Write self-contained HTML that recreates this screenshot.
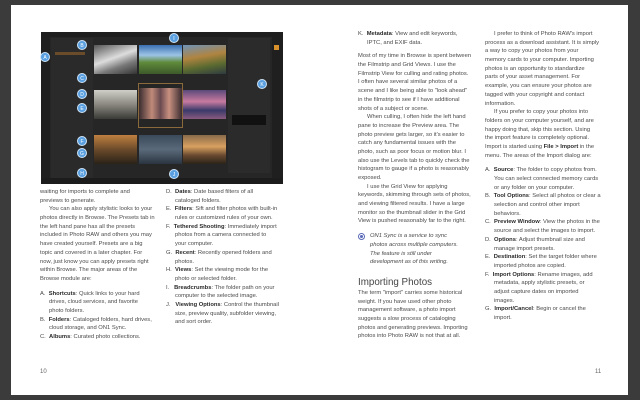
<!DOCTYPE html>
<html><head><meta charset="utf-8"><style>
*{margin:0;padding:0;box-sizing:border-box}
body{width:640px;height:400px;background:#3b3b3b;position:relative;overflow:hidden;font-family:"Liberation Sans",sans-serif}
.page{position:absolute;background:#fff;top:5px;height:390px}
.col{position:absolute;font-size:5.8px;line-height:8.7px;color:#4a4a4a;white-space:nowrap}
.col div{height:8.7px}
.col b{color:#2a2a2a}
.ind{padding-left:9px}
.gap{height:6px!important}
.ss{position:absolute;left:41px;top:32px;width:242px;height:152px;background:#262626}
.ph{position:absolute;width:43px;height:29px}
.bc{position:absolute;width:10px;height:10px;border-radius:50%;background:#5aa0e0;color:#fff;font-size:5px;line-height:10px;text-align:center;border:0.7px solid #cfe4f7}
.pn{position:absolute;font-size:6px;color:#666}
</style></head><body>
<div class="page" style="left:11px;width:309px"></div>
<div class="page" style="left:320px;width:308px"></div>

<div class="ss">
  <div style="position:absolute;left:0;top:0;width:242px;height:5px;background:#1e1e1e"></div>
  <div style="position:absolute;left:0;top:5px;width:9px;height:147px;background:#1f1f1f"></div>
  <div style="position:absolute;left:10px;top:6px;width:42px;height:140px;background:#2a2a2a"></div>
  <div style="position:absolute;left:14px;top:20px;width:30px;height:3px;background:#6a4b2a"></div>
  <div style="position:absolute;left:187px;top:6px;width:42px;height:135px;background:#2b2b2b"></div>
  <div style="position:absolute;left:191px;top:83px;width:34px;height:10px;background:#111"></div>
  <div style="position:absolute;left:231px;top:5px;width:11px;height:147px;background:#1f1f1f"></div>
  <div style="position:absolute;left:233px;top:13px;width:5px;height:5px;background:#d9912c"></div>
  <div style="position:absolute;left:0;top:146px;width:242px;height:6px;background:#1c1c1c"></div>
  <div style="position:absolute;left:97px;top:51px;width:45px;height:45px;border:1px solid #8a6a3a"></div>
  <div class="ph" style="left:53px;top:13px;background:linear-gradient(160deg,#555 0%,#ddd 45%,#777 70%,#333 100%)"></div>
  <div class="ph" style="left:98px;top:13px;background:linear-gradient(180deg,#3a6fb0 0%,#9cc4e6 35%,#5f8a3a 60%,#3d5a2a 100%)"></div>
  <div class="ph" style="left:142px;top:13px;background:linear-gradient(170deg,#6f93b8 0%,#b08440 40%,#5a6a30 70%,#2e3a40 100%)"></div>
  <div class="ph" style="left:53px;top:58px;background:linear-gradient(180deg,#cfcfc8 0%,#8a8880 50%,#3a3a36 100%)"></div>
  <div class="ph" style="left:98px;top:56px;width:43px;height:31px;background:linear-gradient(90deg,#3a2c30 0%,#c08a78 30%,#6a4a50 50%,#c89080 70%,#3a2c30 100%)"></div>
  <div class="ph" style="left:142px;top:58px;background:linear-gradient(180deg,#5a4a7a 0%,#c87aa0 40%,#3a3a6a 70%,#8a5a80 100%)"></div>
  <div class="ph" style="left:53px;top:103px;background:linear-gradient(180deg,#c08040 0%,#6a4a2a 50%,#2a2218 100%)"></div>
  <div class="ph" style="left:98px;top:103px;background:linear-gradient(180deg,#3a4a5a 0%,#5a6a7a 50%,#2a3440 100%)"></div>
  <div class="ph" style="left:142px;top:103px;background:linear-gradient(180deg,#8a6a4a 0%,#d8a060 40%,#6a4a30 70%,#2a2418 100%)"></div>
  <div class="bc" style="left:-1px;top:20px">A</div>
  <div class="bc" style="left:36px;top:8px">B</div>
  <div class="bc" style="left:36px;top:41px">C</div>
  <div class="bc" style="left:36px;top:57px">D</div>
  <div class="bc" style="left:36px;top:71px">E</div>
  <div class="bc" style="left:36px;top:104px">F</div>
  <div class="bc" style="left:36px;top:116px">G</div>
  <div class="bc" style="left:36px;top:136px">H</div>
  <div class="bc" style="left:128px;top:1px">I</div>
  <div class="bc" style="left:128px;top:137px">J</div>
  <div class="bc" style="left:216px;top:47px">K</div>
</div>

<div class="col" style="left:40px;top:188px">
<div>waiting for imports to complete and</div>
<div>previews to generate.</div>
<div class="ind">You can also apply stylistic looks to your</div>
<div>photos directly in Browse. The Presets tab in</div>
<div>the left hand pane has all the presets</div>
<div>included in Photo RAW and others you may</div>
<div>have created yourself. Presets are a big</div>
<div>topic and covered in a later chapter. For</div>
<div>now, just know you can apply presets right</div>
<div>within Browse. The major areas of the</div>
<div>Browse module are:</div>
<div class="gap"></div>
<div>A.&nbsp; <b>Shortcuts</b>: Quick links to your hard</div>
<div class="ind">drives, cloud services, and favorite</div>
<div class="ind">photo folders.</div>
<div>B.&nbsp; <b>Folders</b>: Cataloged folders, hard drives,</div>
<div class="ind">cloud storage, and ON1 Sync.</div>
<div>C.&nbsp; <b>Albums</b>: Curated photo collections.</div>
</div>

<div class="col" style="left:166px;top:188px">
<div>D.&nbsp; <b>Dates</b>: Date based filters of all</div>
<div class="ind">cataloged folders.</div>
<div>E.&nbsp; <b>Filters</b>: Sift and filter photos with built-in</div>
<div class="ind">rules or customized rules of your own.</div>
<div>F.&nbsp; <b>Tethered Shooting</b>: Immediately import</div>
<div class="ind">photos from a camera connected to</div>
<div class="ind">your computer.</div>
<div>G.&nbsp; <b>Recent</b>: Recently opened folders and</div>
<div class="ind">photos.</div>
<div>H.&nbsp; <b>Views</b>: Set the viewing mode for the</div>
<div class="ind">photo or selected folder.</div>
<div>I.&nbsp;&nbsp; <b>Breadcrumbs</b>: The folder path on your</div>
<div class="ind">computer to the selected image.</div>
<div>J.&nbsp;&nbsp; <b>Viewing Options</b>: Control the thumbnail</div>
<div class="ind">size, preview quality, subfolder viewing,</div>
<div class="ind">and sort order.</div>
</div>
<div class="pn" style="left:40px;top:369px">10</div>

<div class="col" style="left:358px;top:30px">
<div>K.&nbsp; <b>Metadata</b>: View and edit keywords,</div>
<div class="ind">IPTC, and EXIF data.</div>
<div class="gap" style="height:5px!important"></div>
<div>Most of my time in Browse is spent between</div>
<div>the Filmstrip and Grid Views. I use the</div>
<div>Filmstrip View for culling and rating photos.</div>
<div>I often have several similar photos of a</div>
<div>scene and I like being able to "look ahead"</div>
<div>in the filmstrip to see if I have additional</div>
<div>shots of a subject or scene.</div>
<div class="ind">When culling, I often hide the left hand</div>
<div>pane to increase the Preview area. The</div>
<div>photo preview gets larger, so it's easier to</div>
<div>catch any fundamental issues with the</div>
<div>photo, such as poor focus or motion blur. I</div>
<div>also use the Levels tab to quickly check the</div>
<div>histogram to gauge if a photo is reasonably</div>
<div>exposed.</div>
<div class="ind">I use the Grid View for applying</div>
<div>keywords, skimming through sets of photos,</div>
<div>and viewing filtered results. I have a large</div>
<div>monitor so the thumbnail slider in the Grid</div>
<div>View is pushed reasonably far to the right.</div>
<div class="gap"></div>
<div style="padding-left:12px;font-style:italic">ON1 <i>Sync</i> is a service to sync</div>
<div style="padding-left:12px;font-style:italic">photos across multiple computers.</div>
<div style="padding-left:12px;font-style:italic">The feature is still under</div>
<div style="padding-left:12px;font-style:italic">development as of this writing.</div>
</div>
<div style="position:absolute;left:358px;top:233px;width:7px;height:7px;border-radius:50%;border:1px solid #5a6ab8"><div style="margin:1px;width:3px;height:3px;border-radius:50%;background:#5a6ab8"></div></div>
<div style="position:absolute;left:358px;top:277px;font-size:9.8px;color:#444">Importing Photos</div>
<div class="col" style="left:358px;top:289px">
<div>The term "import" carries some historical</div>
<div>weight. If you have used other photo</div>
<div>management software, a photo import</div>
<div>suggests a slow process of cataloging</div>
<div>photos and generating previews. Importing</div>
<div>photos into Photo RAW is not that at all.</div>
</div>

<div class="col" style="left:485px;top:30px">
<div class="ind">I prefer to think of Photo RAW's import</div>
<div>process as a download assistant. It is simply</div>
<div>a way to copy your photos from your</div>
<div>memory cards to your computer. Importing</div>
<div>photos is an opportunity to standardize</div>
<div>parts of your asset management. For</div>
<div>example, you can ensure your photos are</div>
<div>tagged with your copyright and contact</div>
<div>information.</div>
<div class="ind">If you prefer to copy your photos into</div>
<div>folders on your computer yourself, and are</div>
<div>happy doing that, skip this section. Using</div>
<div>the import feature is completely optional.</div>
<div>Import is started using <b>File &gt; Import</b> in the</div>
<div>menu. The areas of the Import dialog are:</div>
<div class="gap"></div>
<div>A.&nbsp; <b>Source</b>: The folder to copy photos from.</div>
<div class="ind">You can select connected memory cards</div>
<div class="ind">or any folder on your computer.</div>
<div>B.&nbsp; <b>Tool Options</b>: Select all photos or clear a</div>
<div class="ind">selection and control other import</div>
<div class="ind">behaviors.</div>
<div>C.&nbsp; <b>Preview Window</b>: View the photos in the</div>
<div class="ind">source and select the images to import.</div>
<div>D.&nbsp; <b>Options</b>: Adjust thumbnail size and</div>
<div class="ind">manage import presets.</div>
<div>E.&nbsp; <b>Destination</b>: Set the target folder where</div>
<div class="ind">imported photos are copied.</div>
<div>F.&nbsp; <b>Import Options</b>: Rename images, add</div>
<div class="ind">metadata, apply stylistic presets, or</div>
<div class="ind">adjust capture dates on imported</div>
<div class="ind">images.</div>
<div>G.&nbsp; <b>Import/Cancel</b>: Begin or cancel the</div>
<div class="ind">import.</div>
</div>
<div class="pn" style="left:595px;top:369px">11</div>
</body></html>
